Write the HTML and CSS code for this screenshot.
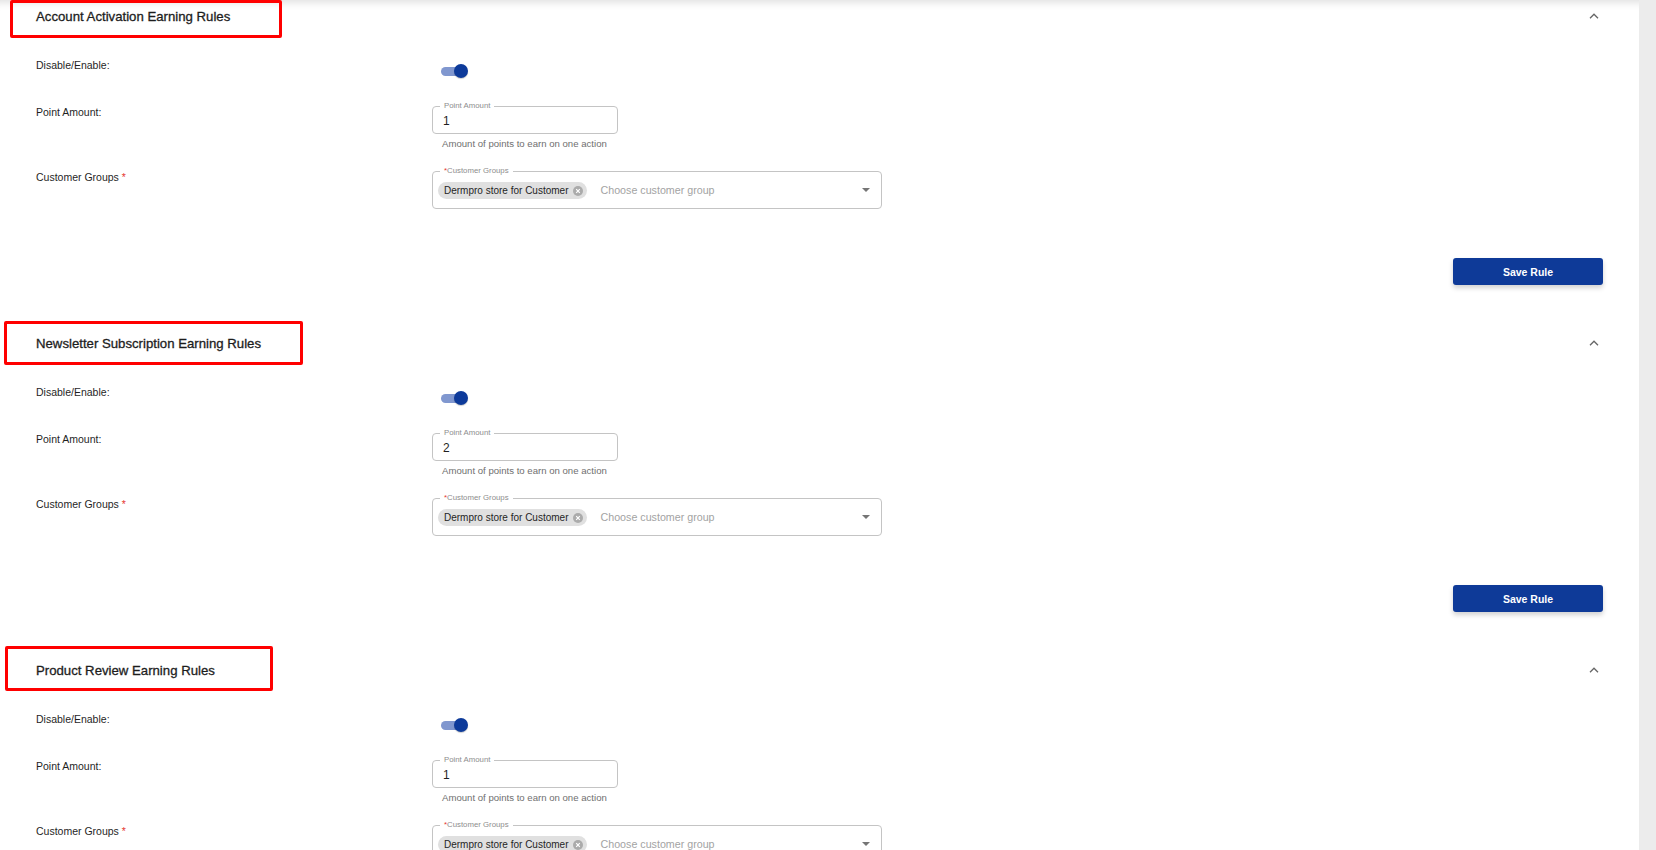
FILE: index.html
```html
<!DOCTYPE html>
<html lang="en">
<head>
<meta charset="utf-8">
<title>Earning Rules</title>
<link rel="stylesheet" href="styles.css">
</head>
<body>
<div class="app">
  <main class="panel">

    <section class="rule">
      <span class="mark mark-1"></span>
      <header class="rule-head">
        <h2 class="rule-title">Account Activation Earning Rules</h2>
        <svg class="chevron" viewBox="0 0 10 6" width="10" height="6"><path d="M1 5.2 L5 1.2 L9 5.2" fill="none" stroke="#666" stroke-width="1.3"/></svg>
      </header>
      <div class="rule-body">
        <div class="field-row row-switch">
          <div class="field-label">Disable/Enable:</div>
          <div class="field-control"><span class="switch"><span class="switch-track"></span><span class="switch-thumb"></span></span></div>
        </div>
        <div class="field-row row-amount">
          <div class="field-label">Point Amount:</div>
          <div class="field-control">
            <div class="outlined amount-box"><span class="legend">Point Amount</span><span class="value">1</span></div>
            <div class="helper">Amount of points to earn on one action</div>
          </div>
        </div>
        <div class="field-row row-groups">
          <div class="field-label">Customer Groups <span class="req">*</span></div>
          <div class="field-control">
            <div class="outlined groups-box">
              <span class="legend"><span class="req">*</span>Customer Groups</span>
              <span class="chip">Dermpro store for Customer<svg class="chip-x" viewBox="0 0 10 10" width="10" height="10"><circle cx="5" cy="5" r="5" fill="#ababab"/><path d="M3.2 3.2 L6.8 6.8 M6.8 3.2 L3.2 6.8" stroke="#fff" stroke-width="1.2"/></svg></span>
              <span class="placeholder">Choose customer group</span>
              <svg class="caret" viewBox="0 0 8 4" width="8" height="4"><path d="M0 0 L8 0 L4 4 Z" fill="#757575"/></svg>
            </div>
          </div>
        </div>
      </div>
      <div class="rule-actions"><button class="btn-save">Save Rule</button></div>
    </section>

    <section class="rule">
      <span class="mark mark-2"></span>
      <header class="rule-head">
        <h2 class="rule-title">Newsletter Subscription Earning Rules</h2>
        <svg class="chevron" viewBox="0 0 10 6" width="10" height="6"><path d="M1 5.2 L5 1.2 L9 5.2" fill="none" stroke="#666" stroke-width="1.3"/></svg>
      </header>
      <div class="rule-body">
        <div class="field-row row-switch">
          <div class="field-label">Disable/Enable:</div>
          <div class="field-control"><span class="switch"><span class="switch-track"></span><span class="switch-thumb"></span></span></div>
        </div>
        <div class="field-row row-amount">
          <div class="field-label">Point Amount:</div>
          <div class="field-control">
            <div class="outlined amount-box"><span class="legend">Point Amount</span><span class="value">2</span></div>
            <div class="helper">Amount of points to earn on one action</div>
          </div>
        </div>
        <div class="field-row row-groups">
          <div class="field-label">Customer Groups <span class="req">*</span></div>
          <div class="field-control">
            <div class="outlined groups-box">
              <span class="legend"><span class="req">*</span>Customer Groups</span>
              <span class="chip">Dermpro store for Customer<svg class="chip-x" viewBox="0 0 10 10" width="10" height="10"><circle cx="5" cy="5" r="5" fill="#ababab"/><path d="M3.2 3.2 L6.8 6.8 M6.8 3.2 L3.2 6.8" stroke="#fff" stroke-width="1.2"/></svg></span>
              <span class="placeholder">Choose customer group</span>
              <svg class="caret" viewBox="0 0 8 4" width="8" height="4"><path d="M0 0 L8 0 L4 4 Z" fill="#757575"/></svg>
            </div>
          </div>
        </div>
      </div>
      <div class="rule-actions"><button class="btn-save">Save Rule</button></div>
    </section>

    <section class="rule">
      <span class="mark mark-3"></span>
      <header class="rule-head">
        <h2 class="rule-title">Product Review Earning Rules</h2>
        <svg class="chevron" viewBox="0 0 10 6" width="10" height="6"><path d="M1 5.2 L5 1.2 L9 5.2" fill="none" stroke="#666" stroke-width="1.3"/></svg>
      </header>
      <div class="rule-body">
        <div class="field-row row-switch">
          <div class="field-label">Disable/Enable:</div>
          <div class="field-control"><span class="switch"><span class="switch-track"></span><span class="switch-thumb"></span></span></div>
        </div>
        <div class="field-row row-amount">
          <div class="field-label">Point Amount:</div>
          <div class="field-control">
            <div class="outlined amount-box"><span class="legend">Point Amount</span><span class="value">1</span></div>
            <div class="helper">Amount of points to earn on one action</div>
          </div>
        </div>
        <div class="field-row row-groups">
          <div class="field-label">Customer Groups <span class="req">*</span></div>
          <div class="field-control">
            <div class="outlined groups-box">
              <span class="legend"><span class="req">*</span>Customer Groups</span>
              <span class="chip">Dermpro store for Customer<svg class="chip-x" viewBox="0 0 10 10" width="10" height="10"><circle cx="5" cy="5" r="5" fill="#ababab"/><path d="M3.2 3.2 L6.8 6.8 M6.8 3.2 L3.2 6.8" stroke="#fff" stroke-width="1.2"/></svg></span>
              <span class="placeholder">Choose customer group</span>
              <svg class="caret" viewBox="0 0 8 4" width="8" height="4"><path d="M0 0 L8 0 L4 4 Z" fill="#757575"/></svg>
            </div>
          </div>
        </div>
      </div>
    </section>

  </main>
  <div class="scroll-track"></div>
</div>
</body>
</html>
```

FILE: styles.css
```css
* { box-sizing: border-box; }

html, body {
  margin: 0;
  padding: 0;
  height: 850px;
  overflow: hidden;
  background: #ffffff;
  font-family: "Liberation Sans", Arial, sans-serif;
  color: #222222;
}

.app {
  display: flex;
  height: 850px;
  overflow: hidden;
}

.panel {
  flex: 1;
  position: relative;
  background: #ffffff;
  box-shadow: inset 0 10px 8px -8px rgba(0, 0, 0, 0.14);
}

.scroll-track {
  width: 17px;
  flex: none;
  background: #ececec;
}

/* ---------- rule section ---------- */
.rule {
  position: relative;
  padding: 0 36px 42px 36px;
}

.mark {
  position: absolute;
  border: 3px solid #ff0000;
  border-radius: 2px;
  pointer-events: none;
}
.mark-1 { left: 10px; top: 0; width: 272px; height: 38px; }
.mark-2 { left: 4px;  top: -6px; width: 299px; height: 44px; }
.mark-3 { left: 5px;  top: -8px; width: 268px; height: 45px; }

.rule-head {
  height: 34px;
  display: flex;
  align-items: center;
  justify-content: space-between;
}

.rule-title {
  margin: 0;
  font-size: 13.2px;
  font-weight: 400;
  -webkit-text-stroke: 0.3px #1d1d1d;
  color: #1d1d1d;
  line-height: 16px;
}

.chevron {
  display: block;
  margin-right: 4px;
  margin-top: -3px;
}

.rule-body {
  padding-top: 23px;
  display: flex;
  flex-direction: column;
}

.field-row {
  display: grid;
  grid-template-columns: 396px 1fr;
  align-items: start;
}

.row-amount { margin-top: 26px; }
.row-groups { margin-top: 19px; }

.field-label {
  font-size: 10.5px;
  line-height: 16px;
  color: #1f1f1f;
}

.req { color: #e53935; }

/* ---------- switch ---------- */
.switch {
  position: relative;
  display: block;
  width: 28px;
  height: 14px;
  margin-top: 7px;
  margin-left: 9px;
}
.switch-track {
  position: absolute;
  left: 0;
  top: 2.5px;
  width: 26px;
  height: 9px;
  border-radius: 5px;
  background: #8097cf;
}
.switch-thumb {
  position: absolute;
  left: 13px;
  top: 0;
  width: 14px;
  height: 14px;
  border-radius: 50%;
  background: #0d3a9a;
  box-shadow: 0 1px 1px rgba(0, 0, 0, 0.2);
}

/* ---------- outlined fields ---------- */
.outlined {
  position: relative;
  border: 1px solid #c4c4c4;
  border-radius: 4px;
  display: flex;
  align-items: center;
}

.legend {
  position: absolute;
  left: 7px;
  top: -6px;
  padding: 0 4px;
  background: #ffffff;
  font-size: 7.8px;
  line-height: 10px;
  color: #8d8d8d;
}

.amount-box {
  width: 186px;
  height: 28px;
  margin-top: 2px;
  padding-left: 10px;
}

.value {
  font-size: 12px;
  color: #1f1f1f;
  padding-top: 1px;
}

.helper {
  margin-top: 4px;
  padding-left: 10px;
  font-size: 9.6px;
  line-height: 12px;
  color: #6f6f6f;
}

.groups-box {
  width: 450px;
  height: 38px;
  margin-top: 2px;
  padding-left: 5px;
  padding-right: 11px;
}

.chip {
  display: inline-flex;
  align-items: center;
  height: 17px;
  padding: 0 4px 0 6px;
  border-radius: 9px;
  background: #e0e0e0;
  font-size: 10px;
  color: #1f1f1f;
  white-space: nowrap;
  margin-top: 1px;
}

.chip-x {
  display: block;
  margin-left: 5px;
}

.placeholder {
  margin-left: 13px;
  font-size: 10.7px;
  color: #a3a3a3;
  flex: 1;
}

.caret { display: block; }

/* ---------- actions ---------- */
.rule-actions {
  display: flex;
  justify-content: flex-end;
  margin-top: 49px;
}

.btn-save {
  width: 150px;
  height: 27px;
  border: 0;
  border-radius: 3px;
  background: #0e3a98;
  color: #ffffff;
  font-family: "Liberation Sans", Arial, sans-serif;
  font-size: 10.5px;
  font-weight: 700;
  box-shadow: 0 3px 5px rgba(0, 0, 0, 0.18);
  cursor: pointer;
}
```
